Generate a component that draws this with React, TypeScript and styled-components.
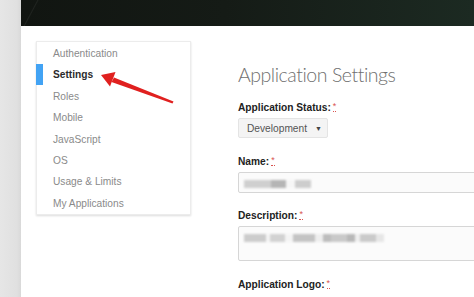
import React from "react";
import styled, { createGlobalStyle } from "styled-components";

interface NavItemProps {
	$active?: boolean;
}

interface BlurBlock {
	w: number;
	shade: string;
}

const GlobalStyle = createGlobalStyle`
  html, body {
    margin: 0;
    padding: 0;
    background: #ffffff;
  }

  body {
    font-family: "Liberation Sans", Arial, sans-serif;
    overflow: hidden;
  }
`;

const Page = styled.div`
  position: relative;
  display: flex;
  width: 474px;
  height: 297px;
  overflow: hidden;
  background: #ffffff;
`;

const Gutter = styled.div`
  flex: 0 0 21px;
  background: linear-gradient(to right, #e6e6e6 0%, #e0e0e0 80%, #d9d9d9 100%);
`;

const Main = styled.div`
  flex: 1;
  display: flex;
  flex-direction: column;
  min-width: 0;
`;

const TopBar = styled.header`
  flex: 0 0 26px;
  background:
    linear-gradient(118deg, transparent 0 14px, rgba(255, 255, 255, 0.06) 15px, transparent 16px),
    linear-gradient(to right, #111511 0%, #151b16 45%, #1c2a22 100%);
`;

const Content = styled.div`
  display: flex;
  align-items: flex-start;
  padding: 15px 0 0 15px;
  gap: 47px;
`;

const Sidebar = styled.nav`
  flex: 0 0 155px;
  box-sizing: border-box;
  border: 1px solid #ececec;
  box-shadow: 0 1px 2px rgba(0, 0, 0, 0.14);
  background: #ffffff;
  padding: 1px 0 0;
`;

const NavItem = styled.div<NavItemProps>`
  position: relative;
  height: 21.4px;
  line-height: 21.4px;
  padding-left: 16px;
  font-size: 10.2px;
  color: ${(props) => (props.$active ? "#2b2b2b" : "#8a8a8a")};
  font-weight: ${(props) => (props.$active ? 700 : 400)};

  &::before {
    content: "";
    display: ${(props) => (props.$active ? "block" : "none")};
    position: absolute;
    left: -1px;
    top: 0;
    width: 7px;
    height: 21px;
    background: #42a3f4;
  }
`;

const Form = styled.section`
  flex: 1;
  display: flex;
  flex-direction: column;
  min-width: 0;
`;

const Title = styled.h1`
  margin: 22px 0 14px;
  font-family: "Lato", "Open Sans", sans-serif;
  font-weight: 300;
  font-size: 19.5px;
  line-height: 24px;
  letter-spacing: -0.45px;
  color: #707070;
  white-space: nowrap;
`;

const Field = styled.div`
  display: flex;
  flex-direction: column;
  align-items: flex-start;
  gap: 3px;
  margin-bottom: 16.5px;
`;

const Label = styled.label`
  font-size: 10.2px;
  line-height: 14px;
  font-weight: 700;
  color: #222222;
  white-space: nowrap;
`;

const Required = styled.abbr`
  margin-left: 2px;
  color: #d9534f;
  font-weight: 400;
  font-size: 9px;
  text-decoration: none;
  border-bottom: 1px dotted #d9534f;
  vertical-align: 2px;
  line-height: 8px;
`;

const Select = styled.div`
  display: flex;
  align-items: center;
  gap: 8px;
  box-sizing: border-box;
  height: 20px;
  padding: 0 5px 0 8px;
  background: #f4f4f4;
  border: 1px solid #e4e4e4;
  border-radius: 2px;
  font-size: 10.2px;
  color: #555555;
`;

const Caret = styled.span`
  font-size: 7px;
  color: #444444;
`;

const Input = styled.div<{ $tall?: boolean }>`
  box-sizing: border-box;
  width: 260px;
  height: ${(props) => (props.$tall ? "35px" : "21px")};
  padding: 7px 5px;
  border: 1px solid #d6d6d6;
  border-radius: 2px;
  background: #fbfbfb;
  display: flex;
  align-items: flex-start;
`;

const Redacted = styled.div`
  display: flex;
  height: 8px;
  filter: blur(0.8px);
`;

const Block = styled.span<{ $shade: string }>`
  display: block;
  height: 100%;
  background: ${(props) => props.$shade};
`;

const Arrow = styled.svg`
  position: absolute;
  left: 0;
  top: 0;
  pointer-events: none;
`;

const navItems = [
	"Authentication",
	"Settings",
	"Roles",
	"Mobile",
	"JavaScript",
	"OS",
	"Usage & Limits",
	"My Applications",
];

const nameBlocks: BlurBlock[] = [
	{ w: 27, shade: "#cfcfcf" },
	{ w: 15, shade: "#b5b5b5" },
	{ w: 9, shade: "#f6f6f6" },
	{ w: 16, shade: "#cdcdcd" },
];

const descBlocks: BlurBlock[] = [
	{ w: 22, shade: "#cccccc" },
	{ w: 4, shade: "#f4f4f4" },
	{ w: 15, shade: "#d2d2d2" },
	{ w: 8, shade: "#f4f4f4" },
	{ w: 22, shade: "#c4c4c4" },
	{ w: 8, shade: "#eeeeee" },
	{ w: 8, shade: "#bdbdbd" },
	{ w: 16, shade: "#c9c9c9" },
	{ w: 8, shade: "#b8b8b8" },
	{ w: 5, shade: "#efefef" },
	{ w: 16, shade: "#cacaca" },
	{ w: 8, shade: "#e6e6e6" },
];

const renderBlocks = (blocks: BlurBlock[]) => (
	<Redacted>
		{blocks.map((b, i) => (
			<Block key={i} $shade={b.shade} style={{ width: b.w }} />
		))}
	</Redacted>
);

const App = () => {
	return (
		<>
			<GlobalStyle />
			<Page>
				<Gutter />
				<Main>
					<TopBar />
					<Content>
						<Sidebar>
							{navItems.map((item) => (
								<NavItem key={item} $active={item === "Settings"}>
									{item}
								</NavItem>
							))}
						</Sidebar>
						<Form>
							<Title>Application Settings</Title>
							<Field>
								<Label>
									Application Status:<Required title="required">*</Required>
								</Label>
								<Select>
									Development <Caret>▼</Caret>
								</Select>
							</Field>
							<Field>
								<Label>
									Name:<Required title="required">*</Required>
								</Label>
								<Input>{renderBlocks(nameBlocks)}</Input>
							</Field>
							<Field>
								<Label>
									Description:<Required title="required">*</Required>
								</Label>
								<Input $tall>{renderBlocks(descBlocks)}</Input>
							</Field>
							<Field>
								<Label>
									Application Logo:<Required title="required">*</Required>
								</Label>
							</Field>
						</Form>
					</Content>
				</Main>
				<Arrow width="474" height="297" viewBox="0 0 474 297">
					<path d="M114 77.5 L173.5 101.5 L172.5 103.5 L111.5 82 Z" fill="#e0201f" />
					<path d="M101 75 L115.5 72 L110 86.5 Z" fill="#e0201f" />
				</Arrow>
			</Page>
		</>
	);
};

export default App;
